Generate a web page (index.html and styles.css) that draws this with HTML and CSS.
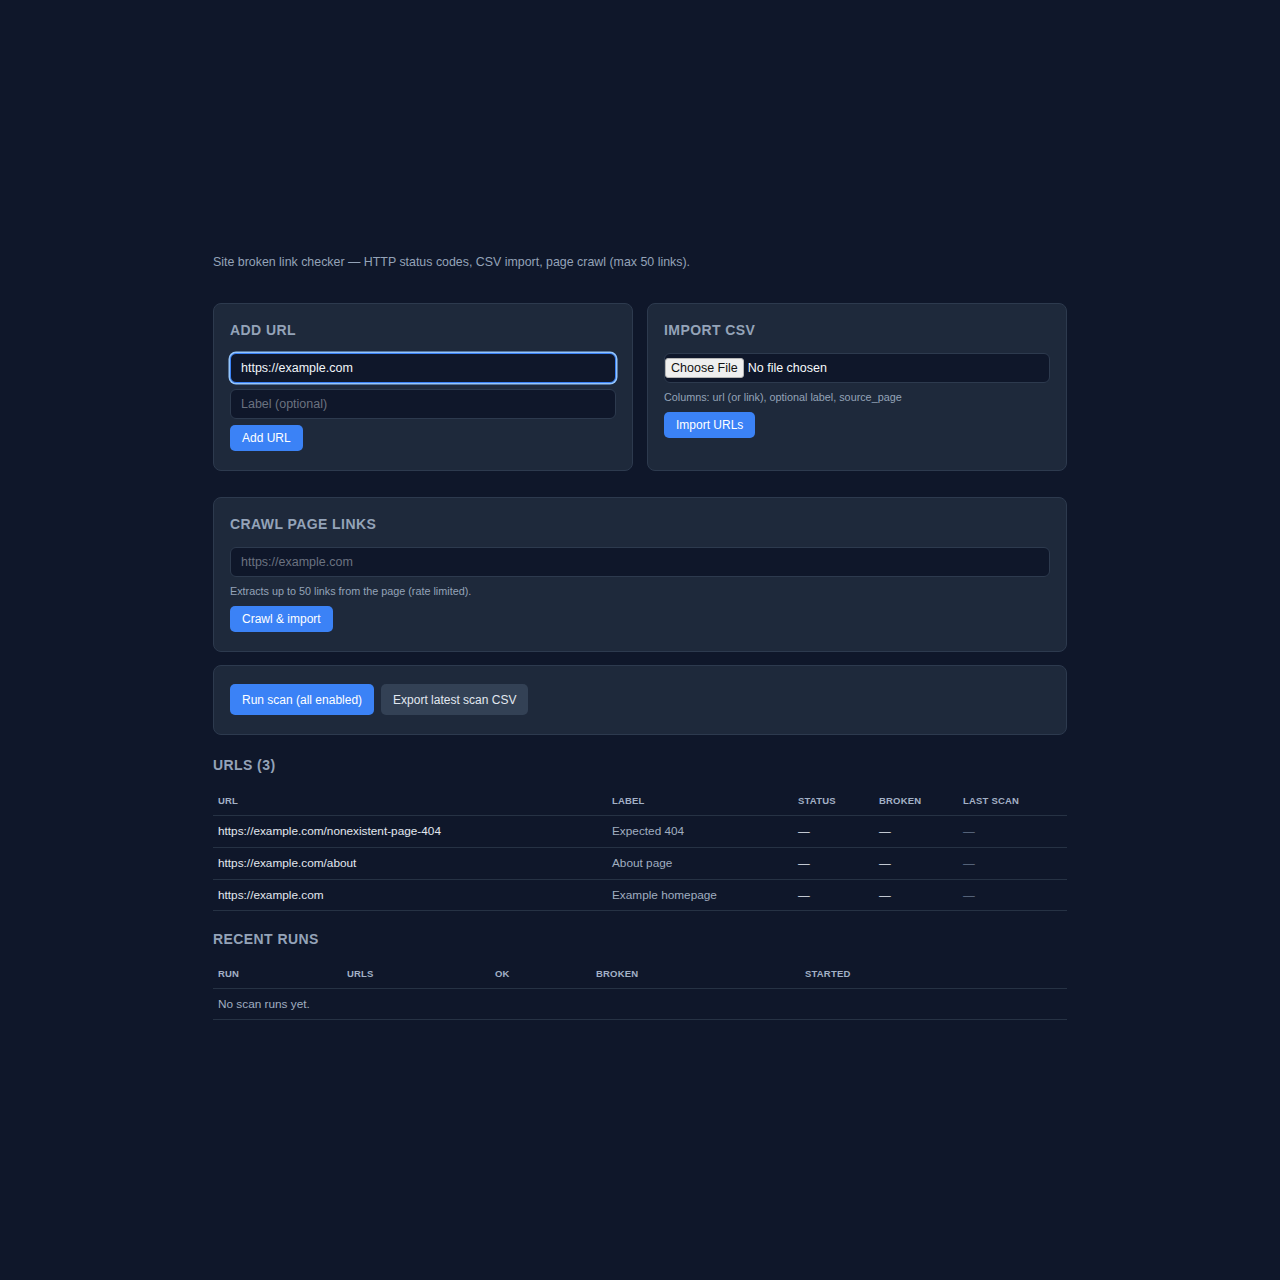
FILE: index.html
```html
<!DOCTYPE html>
<html lang="en">
<head>
<meta charset="utf-8">
<title>Broken link checker</title>
<link rel="stylesheet" href="styles.css">
</head>
<body>
<main class="page">
  <p class="subtitle">Site broken link checker — HTTP status codes, CSV import, page crawl (max 50 links).</p>

  <div class="grid-two">
    <section class="card">
      <h2 class="card-title">Add URL</h2>
      <div class="stack">
        <input class="field field-focus" type="text" value="https://example.com">
        <input class="field" type="text" placeholder="Label (optional)">
        <div><button class="btn btn-primary">Add URL</button></div>
      </div>
    </section>
    <section class="card">
      <h2 class="card-title">Import CSV</h2>
      <div class="stack">
        <input class="field field-file" type="file">
        <p class="hint">Columns: url (or link), optional label, source_page</p>
        <div><button class="btn btn-primary">Import URLs</button></div>
      </div>
    </section>
  </div>

  <section class="card card-gap">
    <h2 class="card-title">Crawl page links</h2>
    <div class="stack">
      <input class="field" type="text" placeholder="https://example.com">
      <p class="hint">Extracts up to 50 links from the page (rate limited).</p>
      <div><button class="btn btn-primary">Crawl &amp; import</button></div>
    </div>
  </section>

  <section class="card card-actions">
    <button class="btn btn-lg btn-primary">Run scan (all enabled)</button>
    <button class="btn btn-lg btn-secondary">Export latest scan CSV</button>
  </section>

  <h2 class="section-title">URLs (3)</h2>
  <table class="data-table urls-table">
    <thead>
      <tr><th class="c-url">URL</th><th class="c-label">Label</th><th class="c-status">Status</th><th class="c-broken">Broken</th><th class="c-last">Last scan</th></tr>
    </thead>
    <tbody>
      <tr><td class="t-main">https://example.com/nonexistent-page-404</td><td class="t-muted">Expected 404</td><td class="t-main">—</td><td class="t-main">—</td><td class="t-dim">—</td></tr>
      <tr><td class="t-main">https://example.com/about</td><td class="t-muted">About page</td><td class="t-main">—</td><td class="t-main">—</td><td class="t-dim">—</td></tr>
      <tr><td class="t-main">https://example.com</td><td class="t-muted">Example homepage</td><td class="t-main">—</td><td class="t-main">—</td><td class="t-dim">—</td></tr>
    </tbody>
  </table>

  <h2 class="section-title section-title-gap">Recent runs</h2>
  <table class="data-table runs-table">
    <thead>
      <tr><th class="r-run">Run</th><th class="r-urls">URLs</th><th class="r-ok">OK</th><th class="r-broken">Broken</th><th class="r-started">Started</th></tr>
    </thead>
    <tbody>
      <tr><td class="t-muted" colspan="5">No scan runs yet.</td></tr>
    </tbody>
  </table>
</main>
</body>
</html>
```

FILE: styles.css
```css
* { box-sizing: border-box; }

html, body {
  margin: 0;
  background: #0f172a;
}

body {
  font-family: "Liberation Sans", Arial, sans-serif;
  color: #e2e8f0;
  font-size: 13px;
}

.page {
  width: 854px;
  margin: 0 auto;
  padding: 253px 0 80px;
}

.subtitle {
  margin: 0 0 32px;
  font-size: 12.4px;
  line-height: 18px;
  color: #94a3b8;
}

.grid-two {
  display: grid;
  grid-template-columns: 1fr 1fr;
  gap: 14px;
}

.card {
  background: #1e293b;
  border: 1px solid #2d3a4e;
  border-radius: 8px;
  padding: 18px 16px 19px;
}

.card-gap { margin-top: 26px; }

.card-title {
  margin: 0 0 15px;
  font-size: 14px;
  line-height: 16px;
  font-weight: 700;
  letter-spacing: 0.03em;
  text-transform: uppercase;
  color: #94a3b8;
}

.stack {
  display: flex;
  flex-direction: column;
  gap: 6px;
}

.field {
  width: 100%;
  height: 30px;
  padding: 0 10px;
  background: #0f172a;
  border: 1px solid #2d3a4e;
  border-radius: 6px;
  color: #f1f5f9;
  font-family: inherit;
  font-size: 12.5px;
  outline: none;
}

.field::placeholder { color: #6b7280; }

.field-focus {
  border-color: #3b82f6;
  box-shadow: 0 0 0 1.5px #93c5fd;
}

.field-file {
  padding: 0;
  line-height: 28px;
  color: #f8fafc;
  font-size: 12.5px;
}

.field-file::file-selector-button {
  height: 20px;
  margin: 0 4px 0 0;
  padding: 0 5px;
  background: #efefef;
  border: 1px solid #b5b5b5;
  border-radius: 3px;
  color: #111;
  font-family: inherit;
  font-size: 12.5px;
}

.hint {
  margin: 0;
  padding: 1px 0 2px;
  font-size: 10.8px;
  line-height: 14px;
  color: #94a3b8;
}

.btn {
  height: 26px;
  padding: 0 12px;
  border: none;
  border-radius: 5px;
  font-family: inherit;
  font-size: 12px;
  color: #fff;
  cursor: pointer;
}

.btn-lg { height: 31px; padding: 0 12px; }

.btn-primary { background: #3b82f6; }
.btn-secondary { background: #334155; color: #e2e8f0; }

.card-actions {
  margin-top: 13px;
  padding-top: 18px;
  padding-bottom: 19px;
  display: flex;
  gap: 7px;
}

.section-title {
  margin: 22px 0 14px;
  font-size: 14px;
  line-height: 16px;
  font-weight: 700;
  letter-spacing: 0.03em;
  text-transform: uppercase;
  color: #94a3b8;
}

.section-title-gap { margin-top: 20px; }

.data-table {
  width: 100%;
  border-collapse: collapse;
  table-layout: fixed;
}

.data-table th {
  text-align: left;
  padding: 8px 5px;
  font-size: 9.5px;
  line-height: 12px;
  font-weight: 700;
  letter-spacing: 0.02em;
  text-transform: uppercase;
  color: #a3b1c6;
  border-bottom: 1px solid #263244;
}

.data-table td {
  padding: 8px 5px;
  font-size: 11.8px;
  line-height: 15px;
  border-bottom: 1px solid #263244;
}

.urls-table tbody tr:last-child td { padding-bottom: 7px; }

.runs-table th { padding-top: 7px; padding-bottom: 8px; }
.runs-table td { padding-top: 8px; padding-bottom: 7px; }

.t-main { color: #e2e8f0; }
.t-muted { color: #a0aec0; }
.t-dim { color: #64748b; }

.c-url { width: 394px; }
.c-label { width: 186px; }
.c-status { width: 81px; }
.c-broken { width: 84px; }
.c-last { width: 109px; }

.r-run { width: 129px; }
.r-urls { width: 148px; }
.r-ok { width: 101px; }
.r-broken { width: 209px; }
.r-started { width: 267px; }
```
